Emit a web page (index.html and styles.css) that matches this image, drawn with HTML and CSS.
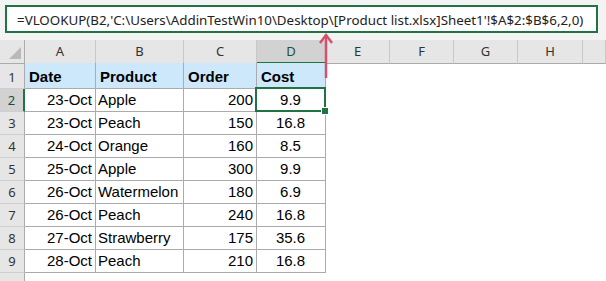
FILE: index.html
```html
<!DOCTYPE html>
<html lang="en">
  <head>
    <meta charset="UTF-8" />
    <title>VLOOKUP from another workbook</title>
    <link rel="stylesheet" href="styles.css">
  </head>
  <body>
    <div class="formula-bar">
      <div class="formula-box">=VLOOKUP(B2,'C:\Users\AddinTestWin10\Desktop\[Product list.xlsx]Sheet1'!$A$2:$B$6,2,0)</div>
    </div>

    <div class="sheet">
      <div class="row col-heads">
        <div class="corner"><span class="corner-mark"></span></div>
        <div>A</div>
        <div>B</div>
        <div>C</div>
        <div class="sel">D</div>
        <div>E</div>
        <div>F</div>
        <div>G</div>
        <div>H</div>
        <div></div>
      </div>

      <div class="row first">
        <div class="rh">1</div>
        <div class="c head">Date</div>
        <div class="c head">Product</div>
        <div class="c head">Order</div>
        <div class="c head">Cost</div>
        <div></div><div></div><div></div><div></div><div></div>
      </div>
      <div class="row">
        <div class="rh sel">2</div>
        <div class="c num">23-Oct</div>
        <div class="c">Apple</div>
        <div class="c num">200</div>
        <div class="c mid active">9.9<span class="handle"></span></div>
        <div></div><div></div><div></div><div></div><div></div>
      </div>
      <div class="row">
        <div class="rh">3</div>
        <div class="c num">23-Oct</div>
        <div class="c">Peach</div>
        <div class="c num">150</div>
        <div class="c mid">16.8</div>
        <div></div><div></div><div></div><div></div><div></div>
      </div>
      <div class="row">
        <div class="rh">4</div>
        <div class="c num">24-Oct</div>
        <div class="c">Orange</div>
        <div class="c num">160</div>
        <div class="c mid">8.5</div>
        <div></div><div></div><div></div><div></div><div></div>
      </div>
      <div class="row">
        <div class="rh">5</div>
        <div class="c num">25-Oct</div>
        <div class="c">Apple</div>
        <div class="c num">300</div>
        <div class="c mid">9.9</div>
        <div></div><div></div><div></div><div></div><div></div>
      </div>
      <div class="row">
        <div class="rh">6</div>
        <div class="c num">26-Oct</div>
        <div class="c">Watermelon</div>
        <div class="c num">180</div>
        <div class="c mid">6.9</div>
        <div></div><div></div><div></div><div></div><div></div>
      </div>
      <div class="row">
        <div class="rh">7</div>
        <div class="c num">26-Oct</div>
        <div class="c">Peach</div>
        <div class="c num">240</div>
        <div class="c mid">16.8</div>
        <div></div><div></div><div></div><div></div><div></div>
      </div>
      <div class="row">
        <div class="rh">8</div>
        <div class="c num">27-Oct</div>
        <div class="c">Strawberry</div>
        <div class="c num">175</div>
        <div class="c mid">35.6</div>
        <div></div><div></div><div></div><div></div><div></div>
      </div>
      <div class="row">
        <div class="rh">9</div>
        <div class="c num">28-Oct</div>
        <div class="c">Peach</div>
        <div class="c num">210</div>
        <div class="c mid">16.8</div>
        <div></div><div></div><div></div><div></div><div></div>
      </div>
      <div class="row last">
        <div class="rh"></div>
        <div></div><div></div><div></div><div></div>
        <div></div><div></div><div></div><div></div><div></div>
      </div>

      <!-- callout arrow pointing at the workbook path -->
      <svg class="arrow" width="16" height="48" viewBox="0 0 16 48">
        <line x1="8" y1="3" x2="8" y2="46" />
        <polyline points="2,11 8,3 14,11" />
      </svg>
    </div>
  </body>
</html>
```

FILE: styles.css
```css
body {
  margin: 0;
  background: #fff;
  font-family: "Liberation Sans", Arial, sans-serif;
  color: #000;
}
.formula-bar {
  height: 40px;
  padding: 5px 8px 0 5px;
  box-sizing: border-box;
  background: #f3f3f3;
}
.formula-box {
  height: 28px;
  box-sizing: border-box;
  border: 2px solid #217346;
  background: #fff;
  padding: 2px 0 0 10px;
  display: flex;
  align-items: center;
  font-family: "Noto Sans", "Open Sans", sans-serif;
  font-size: 13.35px;
  color: #222;
  white-space: nowrap;
}
.sheet {
  position: relative;
}
.row {
  display: grid;
  grid-template-columns: 25px 71px 88px 73px 69px 64px 64px 64px 65px 1fr;
  height: 23px;
}
.row > div {
  box-sizing: border-box;
  font-size: 15px;
  line-height: 17px;
  white-space: nowrap;
}
.row.first {
  height: 26px;
}
.row.last {
  height: 9px;
}
.col-heads > div {
  background: #e6e6e6;
  border-right: 1px solid #c8c8c8;
  border-bottom: 1px solid #ababab;
  text-align: center;
  font-family: "Noto Sans", "Open Sans", sans-serif;
  font-size: 13px;
  line-height: 22px;
  color: #333;
}
.col-heads > .sel {
  background: #d2d2d2;
  border-bottom: 2px solid #217346;
  color: #1f4f37;
}
.col-heads > .corner {
  position: relative;
  border-right-color: #ababab;
}
.corner-mark {
  position: absolute;
  right: 3px;
  bottom: 4px;
  width: 0;
  height: 0;
  border-left: 12px solid transparent;
  border-bottom: 12px solid #b9b9b9;
}
.rh {
  background: #e6e6e6;
  border-right: 1px solid #ababab;
  border-bottom: 1px solid #cfcfcf;
  display: flex;
  align-items: flex-end;
  justify-content: center;
  padding-bottom: 2px;
  font-family: "Noto Sans", "Open Sans", sans-serif;
  font-size: 13px !important;
  color: #333;
}
.rh.sel {
  background: #d2d2d2;
  border-right: 2px solid #217346;
  color: #1f4f37;
}
.c {
  border-right: 1px solid #ababab;
  border-bottom: 1px solid #ababab;
  display: flex;
  align-items: flex-end;
  padding: 0 3px 3px 2px;
}
.c.head {
  background: #cce8fa;
  font-weight: bold;
  padding-left: 4px;
}
.c.num {
  justify-content: flex-end;
}
.c.mid {
  justify-content: center;
}
.c.active {
  position: relative;
}
.c.active::after {
  content: "";
  position: absolute;
  left: -2px;
  top: -2px;
  right: -1px;
  bottom: -1px;
  border: 2px solid #217346;
}
.handle {
  position: absolute;
  right: -4px;
  bottom: -4px;
  width: 6px;
  height: 6px;
  background: #217346;
  border: 1px solid #fff;
  z-index: 1;
}
.arrow {
  position: absolute;
  left: 318px;
  top: -8px;
}
.arrow line,
.arrow polyline {
  stroke: #d4506b;
  stroke-width: 2.5;
  fill: none;
}
```
